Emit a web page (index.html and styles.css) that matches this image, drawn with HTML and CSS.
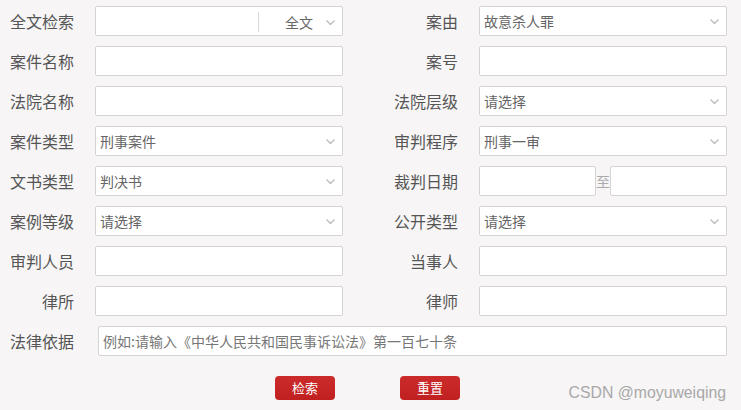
FILE: index.html
```html
<!DOCTYPE html>
<html lang="zh-CN">
<head>
<meta charset="utf-8">
<title>检索</title>
<link rel="stylesheet" href="styles.css">
</head>
<body>
<form class="search">
  <div class="row">
    <label class="lbl">全文检索</label>
    <div class="box combo">
      <span class="combo-text"></span>
      <span class="combo-sel">全文<svg class="chev" viewBox="0 0 9 5"><path d="M0.5 0.5 L4.5 4.5 L8.5 0.5"/></svg></span>
    </div>
    <label class="lbl">案由</label>
    <div class="box select"><span class="val">故意杀人罪</span><svg class="chev" viewBox="0 0 9 5"><path d="M0.5 0.5 L4.5 4.5 L8.5 0.5"/></svg></div>
  </div>
  <div class="row">
    <label class="lbl">案件名称</label>
    <div class="box"></div>
    <label class="lbl">案号</label>
    <div class="box"></div>
  </div>
  <div class="row">
    <label class="lbl">法院名称</label>
    <div class="box"></div>
    <label class="lbl">法院层级</label>
    <div class="box select"><span class="val">请选择</span><svg class="chev" viewBox="0 0 9 5"><path d="M0.5 0.5 L4.5 4.5 L8.5 0.5"/></svg></div>
  </div>
  <div class="row">
    <label class="lbl">案件类型</label>
    <div class="box select"><span class="val">刑事案件</span><svg class="chev" viewBox="0 0 9 5"><path d="M0.5 0.5 L4.5 4.5 L8.5 0.5"/></svg></div>
    <label class="lbl">审判程序</label>
    <div class="box select"><span class="val">刑事一审</span><svg class="chev" viewBox="0 0 9 5"><path d="M0.5 0.5 L4.5 4.5 L8.5 0.5"/></svg></div>
  </div>
  <div class="row">
    <label class="lbl">文书类型</label>
    <div class="box select"><span class="val">判决书</span><svg class="chev" viewBox="0 0 9 5"><path d="M0.5 0.5 L4.5 4.5 L8.5 0.5"/></svg></div>
    <label class="lbl">裁判日期</label>
    <div class="dates">
      <div class="box date"></div>
      <span class="to">至</span>
      <div class="box date"></div>
    </div>
  </div>
  <div class="row">
    <label class="lbl">案例等级</label>
    <div class="box select"><span class="val">请选择</span><svg class="chev" viewBox="0 0 9 5"><path d="M0.5 0.5 L4.5 4.5 L8.5 0.5"/></svg></div>
    <label class="lbl">公开类型</label>
    <div class="box select"><span class="val">请选择</span><svg class="chev" viewBox="0 0 9 5"><path d="M0.5 0.5 L4.5 4.5 L8.5 0.5"/></svg></div>
  </div>
  <div class="row">
    <label class="lbl">审判人员</label>
    <div class="box"></div>
    <label class="lbl">当事人</label>
    <div class="box"></div>
  </div>
  <div class="row">
    <label class="lbl">律所</label>
    <div class="box"></div>
    <label class="lbl">律师</label>
    <div class="box"></div>
  </div>
  <div class="row row-wide">
    <label class="lbl">法律依据</label>
    <div class="box"><span class="ph">例如:请输入《中华人民共和国民事诉讼法》第一百七十条</span></div>
  </div>
  <div class="actions">
    <button type="button" class="btn">检索</button>
    <button type="button" class="btn">重置</button>
  </div>
</form>
<div class="watermark">CSDN @moyuweiqing</div>
</body>
</html>
```
FILE: styles.css
```css
html, body {
  margin: 0;
  padding: 0;
}
body {
  background: #f7f5f6;
  font-family: "Noto Sans CJK SC", "Noto Sans", sans-serif;
  color: #555;
  width: 741px;
  height: 410px;
  position: relative;
  overflow: hidden;
}
.search {
  padding-top: 6px;
  display: flex;
  flex-direction: column;
  gap: 10px;
}
.row {
  display: grid;
  grid-template-columns: 95px 248px 136px 248px;
  height: 30px;
  align-items: center;
}
.row-wide {
  grid-template-columns: 98px 629px;
}
.lbl {
  text-align: right;
  padding-right: 21px;
  font-size: 16px;
  line-height: 30px;
  color: #555;
  white-space: nowrap;
}
.row-wide .lbl {
  padding-right: 24px;
}
.box {
  box-sizing: border-box;
  height: 30px;
  background: #fff;
  border: 1px solid #d4d4d4;
  border-radius: 2px;
  display: flex;
  align-items: center;
  padding: 0 4px;
  font-size: 14px;
  color: #666;
  position: relative;
}
.select {
  justify-content: space-between;
  padding-right: 7px;
}
.val {
  line-height: 28px;
  white-space: nowrap;
}
.chev {
  width: 9px;
  height: 5px;
  fill: none;
  stroke: #b8b8b8;
  stroke-width: 1.2;
  flex: none;
}
.combo {
  padding: 0;
}
.combo-text {
  flex: 1;
  height: 100%;
}
.combo-sel {
  width: 84px;
  height: 20px;
  border-left: 1px solid #d8d8d8;
  box-sizing: border-box;
  display: flex;
  align-items: center;
  justify-content: flex-end;
  gap: 13px;
  padding-right: 7px;
  margin-top: 2px;
  color: #666;
  line-height: 20px;
}
.dates {
  display: flex;
  align-items: center;
  height: 30px;
}
.date {
  width: 117px;
}
.to {
  width: 14px;
  font-size: 14px;
  color: #aaa;
  line-height: 30px;
  text-align: center;
}
.ph {
  color: #777;
  white-space: nowrap;
  line-height: 28px;
}
.actions {
  display: flex;
  justify-content: center;
  gap: 65px;
  padding-right: 6px;
  margin-top: 10px;
}
.btn {
  width: 60px;
  height: 24px;
  border: none;
  border-radius: 4px;
  background: linear-gradient(#cc2b2b, #c0201f);
  color: #fff;
  font-family: "Noto Sans CJK SC", sans-serif;
  font-size: 13px;
  line-height: 24px;
  padding: 0;
}
.watermark {
  position: absolute;
  right: 15px;
  bottom: 8px;
  font-family: "Liberation Sans", Arial, sans-serif;
  font-size: 15.8px;
  color: #a8a8a8;
  line-height: 18px;
}
```
